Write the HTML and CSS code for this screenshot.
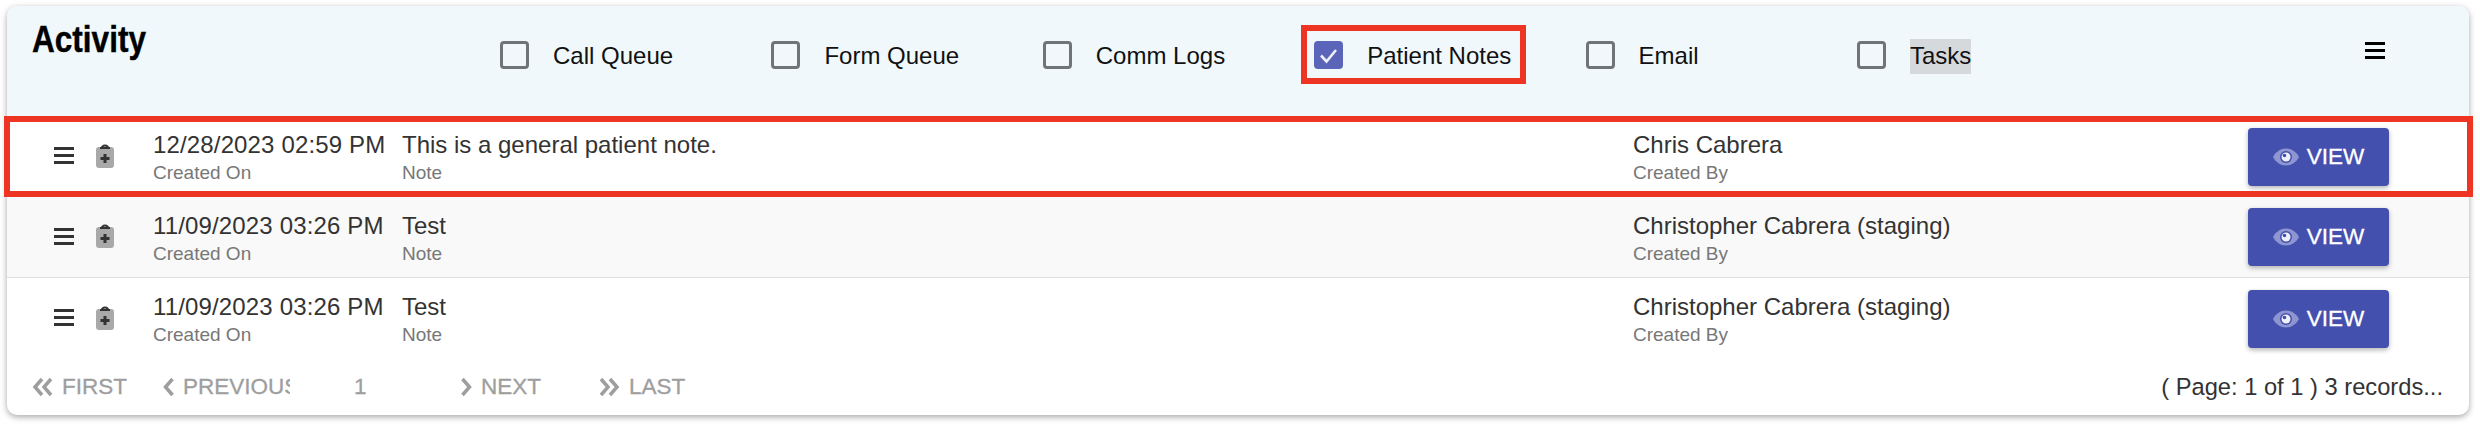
FILE: index.html
```html
<!DOCTYPE html>
<html lang="en">
<head>
    <meta charset="UTF-8" />
    <title>Activity</title>
    <link rel="stylesheet" href="styles.css">
</head>
<body>
    <svg class="sprites">
        <symbol id="bars" viewBox="0 0 20 17"><path d="M0 1.5h20M0 8.5h20M0 15.5h20" stroke="currentColor" stroke-width="3"/></symbol>
        <symbol id="clipboard" viewBox="0 0 18 24"><path d="M5.5 5a3.5 3.5 0 0 1 7 0" fill="none" stroke="#333" stroke-width="2"/><rect y="3" width="18" height="21" rx="3" fill="#a9a9a9"/><path d="M4 4h10" stroke="#333" stroke-width="2"/><path d="M9 10v9M4.500 14.500h9" stroke="#333" stroke-width="3"/></symbol>
        <symbol id="eye" viewBox="0 0 26 18"><path d="M0 9C3 3.500 7.500 0.500 13 0.500S23 3.500 26 9c-3 5.500-7.500 8.500-13 8.500S3 14.500 0 9z" fill="#8f95d0"/><circle cx="13" cy="9" r="6" fill="#4450ae"/><circle cx="13" cy="9" r="4.500" fill="#eef0fa"/><circle cx="11.500" cy="7.500" r="1.800" fill="#4450ae"/></symbol>
    </svg>

    <div class="card">
        <div class="card-header">
            <h1><span>Activity</span></h1>
            <div class="filters">
                <label class="filter"><span class="box"></span><span>Call Queue</span></label>
                <label class="filter"><span class="box"></span><span>Form Queue</span></label>
                <label class="filter"><span class="box"></span><span>Comm Logs</span></label>
                <label class="filter marked">
                    <span class="box checked">
                        <svg viewBox="0 0 29 28" width="29" height="28"><path d="M7 14.500l5.500 6L22 9" fill="none" stroke="#eef0fa" stroke-width="2.600"/></svg>
                    </span>
                    <span>Patient Notes</span>
                </label>
                <label class="filter"><span class="box"></span><span>Email</span></label>
                <label class="filter"><span class="box"></span><span class="selected">Tasks</span></label>
            </div>
            <svg class="menu-icon" width="20" height="17"><use href="#bars"/></svg>
        </div>

        <div class="row marked">
            <div class="row-icons">
                <svg width="20" height="17"><use href="#bars"/></svg>
                <svg width="18" height="24"><use href="#clipboard"/></svg>
            </div>
            <div><div class="main date">12/28/2023 02:59 PM</div><div class="sub">Created On</div></div>
            <div><div class="main">This is a general patient note.</div><div class="sub">Note</div></div>
            <div><div class="main">Chris Cabrera</div><div class="sub">Created By</div></div>
            <button class="view-btn"><svg width="26" height="18"><use href="#eye"/></svg>VIEW</button>
        </div>
        <div class="row alt">
            <div class="row-icons">
                <svg width="20" height="17"><use href="#bars"/></svg>
                <svg width="18" height="24"><use href="#clipboard"/></svg>
            </div>
            <div><div class="main date">11/09/2023 03:26 PM</div><div class="sub">Created On</div></div>
            <div><div class="main">Test</div><div class="sub">Note</div></div>
            <div><div class="main">Christopher Cabrera (staging)</div><div class="sub">Created By</div></div>
            <button class="view-btn"><svg width="26" height="18"><use href="#eye"/></svg>VIEW</button>
        </div>
        <div class="row">
            <div class="row-icons">
                <svg width="20" height="17"><use href="#bars"/></svg>
                <svg width="18" height="24"><use href="#clipboard"/></svg>
            </div>
            <div><div class="main date">11/09/2023 03:26 PM</div><div class="sub">Created On</div></div>
            <div><div class="main">Test</div><div class="sub">Note</div></div>
            <div><div class="main">Christopher Cabrera (staging)</div><div class="sub">Created By</div></div>
            <button class="view-btn"><svg width="26" height="18"><use href="#eye"/></svg>VIEW</button>
        </div>

        <div class="pager">
            <span class="page-btn first"><svg viewBox="0 0 21 20" width="21" height="20"><path d="M10 2L3 10l7 8M19 2l-7 8 7 8" fill="none" stroke="#9e9e9e" stroke-width="3.500"/></svg>FIRST</span>
            <span class="page-btn previous"><svg viewBox="0 0 11 20" width="11" height="20"><path d="M9.500 2L2.500 10l7 8" fill="none" stroke="#9e9e9e" stroke-width="3.500"/></svg>PREVIOUS</span>
            <span class="page-num">1</span>
            <span class="page-btn next"><svg viewBox="0 0 11 20" width="11" height="20"><path d="M1.500 2l7 8-7 8" fill="none" stroke="#9e9e9e" stroke-width="3.500"/></svg>NEXT</span>
            <span class="page-btn last"><svg viewBox="0 0 21 20" width="21" height="20"><path d="M2 2l7 8-7 8M11 2l7 8-7 8" fill="none" stroke="#9e9e9e" stroke-width="3.500"/></svg>LAST</span>
            <span class="page-info">( Page: 1 of 1 ) 3 records...</span>
        </div>
    </div>
</body>
</html>
```

FILE: styles.css
```css
* {
    box-sizing: border-box;
}
body {
    margin: 0;
    padding: 6px 11px 9px 7px;
    background-color: #fff;
    font-family: 'Liberation Sans', Arial, sans-serif;
    color: #333;
}
.sprites {
    display: none;
}
svg {
    flex: none;
}
.card {
    height: 409px;
    border-radius: 10px;
    background-color: #fff;
    box-shadow: 0 2px 6px rgba(0,0,0,0.35);
}

/* Cabecera con filtros */
.card-header {
    display: flex;
    height: 110px;
    padding-left: 25px;
    border-radius: 10px 10px 0 0;
    background-color: #f0f8fb;
}
h1 {
    width: 468px;
    margin: 0;
    padding-top: 12px;
    font-size: 37px;
    line-height: 44px;
    font-weight: 700;
    color: #000;
    -webkit-text-stroke: 0.4px #000;
}
h1 span {
    display: inline-block;
    transform: scaleX(0.853);
    transform-origin: left;
}
.filters {
    display: grid;
    grid-template-columns: repeat(6, 271.4px);
    padding-top: 35px;
}
.filter {
    position: relative;
    display: flex;
    align-items: center;
    gap: 24px;
    height: 28px;
    font-size: 24px;
    line-height: 30px;
    color: #111;
}
.filter span + span {
    position: relative;
    top: 1px;
}
.box {
    flex: none;
    width: 29px;
    height: 28px;
    border: 3px solid #6f7478;
    border-radius: 4px;
}
.box.checked {
    border: none;
    background-color: #5a64b8;
}
.box svg {
    display: block;
}
.selected {
    padding: 2px 0 3px;
    background-color: #d6d9dc;
}
.menu-icon {
    margin: 36px 0 0 237px;
    color: #000;
}

/* Filas */
.row {
    position: relative;
    display: grid;
    grid-template-columns: 146px 249px 1231px 615px 141px;
    align-items: center;
    height: 81px;
}
.row.alt {
    border-bottom: 1px solid #e0e0e0;
    background-color: #f9f9f9;
}
.row-icons {
    display: flex;
    align-items: center;
    gap: 22px;
    padding-left: 47px;
    margin-bottom: 2px;
    color: #333;
}
.main {
    margin-top: 2px;
    font-size: 24px;
    line-height: 28px;
    white-space: nowrap;
}
.date {
    letter-spacing: 0.15px;
}
.sub {
    margin-top: 3px;
    font-size: 19px;
    line-height: 22px;
    color: #777;
}
.view-btn {
    display: flex;
    align-items: center;
    justify-content: center;
    gap: 8px;
    height: 58px;
    padding: 0;
    border: none;
    border-radius: 4px;
    background-color: #4450ae;
    color: #fff;
    font-family: inherit;
    font-size: 22.5px;
    -webkit-text-stroke: 0.3px #fff;
    box-shadow: 0 2px 5px rgba(0,0,0,0.3);
}

/* Recuadros rojos */
.marked::after {
    content: "";
    position: absolute;
    border: 6px solid #ee3524;
}
.filter.marked::after {
    top: -16px;
    bottom: -15px;
    left: -13px;
    right: 60px;
}
.row.marked::after {
    top: 0;
    bottom: 0;
    left: -3px;
    right: -4px;
}

/* Paginador */
.pager {
    display: flex;
    align-items: center;
    height: 56px;
    font-size: 22.5px;
    color: #9e9e9e;
    -webkit-text-stroke: 0.3px #9e9e9e;
}
.page-btn {
    display: flex;
    align-items: center;
    gap: 9px;
    flex: none;
    overflow: hidden;
    white-space: nowrap;
}
.first {
    margin-left: 25px;
    width: 131px;
}
.previous {
    width: 127px;
}
.page-num {
    flex: none;
    width: 171px;
    padding-left: 64px;
}
.next {
    width: 138px;
}
.last {
    width: 120px;
}
.page-info {
    margin-left: auto;
    margin-right: 26px;
    font-size: 23.7px;
    color: #333;
    -webkit-text-stroke: 0;
}
```
